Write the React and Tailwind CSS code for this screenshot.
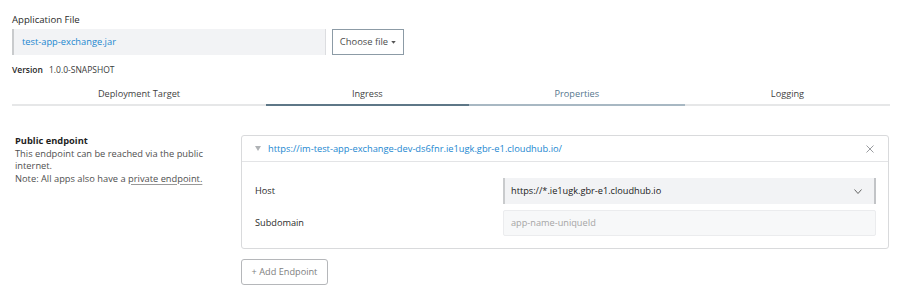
import React from 'react';

const tabs = [
  { label: 'Deployment Target', bar: 'border-[#e6e7e8]', text: 'text-[#3f3f3f]' },
  { label: 'Ingress', bar: 'border-[#5e7787]', text: 'text-[#3f3f3f]' },
  { label: 'Properties', bar: 'border-[#a8b8c3]', text: 'text-[#56768e]' },
  { label: 'Logging', bar: 'border-[#e6e7e8]', text: 'text-[#3f3f3f]' },
];

const App = () => {
  return (
    <div className="w-[900px] h-[302px] bg-white font-['Open_Sans',sans-serif] text-[#2b2b2b] pl-3 pr-[10px] pt-3">
      <div className="text-[9.6px] leading-[16px]">Application File</div>

      <div className="flex gap-[6px] mt-px">
        <div className="w-[314px] h-[26px] bg-[#f2f3f5] border-l-2 border-[#c9cbcd] border-r border-r-[#dcdde0] flex items-center pl-[8px] text-[9.3px] text-[#1b87d0]">
          test-app-exchange.jar
        </div>
        <button className="w-[72px] h-[26px] border border-[#8c9ba6] bg-white text-[9.4px] text-[#4d4d4d] flex items-center justify-center gap-[3px]">
          Choose file
          <svg width="5" height="3" viewBox="0 0 6 4"><path d="M0 0h6L3 3.5z" fill="#555" /></svg>
        </button>
      </div>

      <div className="mt-[9px] text-[8.5px] leading-[12px]">
        <span className="font-semibold text-[#1f1f1f]">Version</span>
        <span className="ml-[6px] text-[#3a3a3a]">1.0.0-SNAPSHOT</span>
      </div>

      <div className="flex mt-[10px]">
        {tabs.map((t) => (
          <div key={t.label} className={`flex-auto text-center text-[9.2px] leading-[16px] pb-[2px] border-b-[2px] ${t.bar} ${t.text}`}>
            {t.label}
          </div>
        ))}
      </div>

      <div className="flex mt-[29px]">
        <div className="w-[229px] pl-[3px] text-[9.3px] leading-[12.5px] text-[#4f4f4f]">
          <div className="max-w-[200px]">
            <div className="font-bold text-[#1f1f1f]">Public endpoint</div>
            <div>This endpoint can be reached via the public internet.</div>
            <div>
              Note: All apps also have a{' '}
              <span className="underline decoration-[#999] underline-offset-2">private endpoint.</span>
            </div>
          </div>
        </div>

        <div className="w-[648px]">
          <div className="border border-[#d9dadc] rounded-[3px]">
            <div className="h-[26px] border-b border-[#e3e4e6] flex items-center pl-[13px] pr-[14px]">
              <svg width="6" height="5" viewBox="0 0 6 5"><path d="M0 0h6L3 5z" fill="#b0b3b6" /></svg>
              <span className="ml-[7px] text-[9.3px] text-[#1b87d0] flex-1">
                https://im-test-app-exchange-dev-ds6fnr.ie1ugk.gbr-e1.cloudhub.io/
              </span>
              <svg width="8" height="8" viewBox="0 0 8 8"><path d="M0.5 0.5l7 7M7.5 0.5l-7 7" stroke="#9a9ca0" strokeWidth="1" /></svg>
            </div>

            <div className="grid grid-cols-[248px_1fr] gap-y-[6px] pl-[13px] pr-[12px] pt-[16px] pb-[12px] text-[9.2px]">
              <div className="flex items-center text-[#2b2b2b]">Host</div>
              <div className="h-[26px] bg-[#f2f3f5] border-l-2 border-[#c9cbcd] border-r-2 border-r-[#c2c4c7] flex items-center pl-[6px] pr-[12px] text-[#1a1a1a]">
                <span className="flex-1">https://*.ie1ugk.gbr-e1.cloudhub.io</span>
                <svg width="8" height="5" viewBox="0 0 8 5"><path d="M0.5 0.5l3.5 4 3.5-4" fill="none" stroke="#666" strokeWidth="1" /></svg>
              </div>

              <div className="flex items-center text-[#2b2b2b]">Subdomain</div>
              <div className="h-[26px] bg-[#f7f8f9] border border-[#ebecee] rounded-[2px] flex items-center pl-[7px] text-[#a5a5a5]">
                app-name-uniqueId
              </div>
            </div>
          </div>

          <button className="mt-[10px] w-[87px] h-[26px] border border-[#b5b7ba] rounded-[3px] text-[9.2px] text-[#808080] flex items-center justify-center">
            + Add Endpoint
          </button>
        </div>
      </div>
    </div>
  );
};

export default App;
